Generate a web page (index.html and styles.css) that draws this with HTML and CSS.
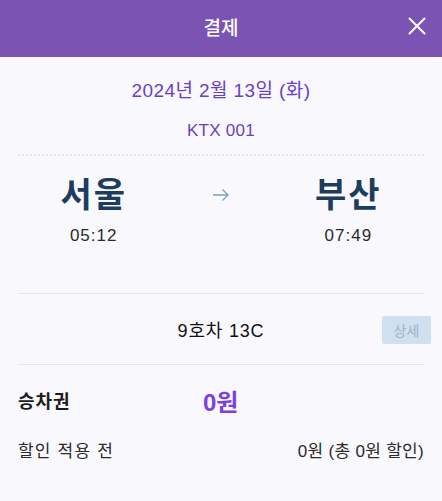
FILE: index.html
```html
<!DOCTYPE html>
<html lang="ko">
<head>
<meta charset="utf-8">
<link rel="stylesheet" href="styles.css">
</head>
<body>
<header class="topbar">
  <h1 class="title">결제</h1>
  <button class="close" aria-label="닫기">
    <svg width="18" height="18" viewBox="0 0 18 18"><path d="M1.5 1.5L16.5 16.5M16.5 1.5L1.5 16.5" stroke="#fff" stroke-width="2" stroke-linecap="round"/></svg>
  </button>
</header>
<main class="content">
  <section class="train">
    <div class="date">2024년 2월 13일 (화)</div>
    <div class="train-no">KTX 001</div>
  </section>
  <section class="route">
    <div class="station">
      <div class="name">서울</div>
      <div class="time">05:12</div>
    </div>
    <div class="arrow">
      <svg width="18" height="14" viewBox="0 0 18 14"><path d="M1 7H16M10.5 1.5L16 7L10.5 12.5" fill="none" stroke="#7f9fbc" stroke-width="1.3"/></svg>
    </div>
    <div class="station">
      <div class="name">부산</div>
      <div class="time">07:49</div>
    </div>
  </section>
  <section class="seat">
    <span class="seat-text">9호차 13C</span>
    <button class="detail">상세</button>
  </section>
  <section class="price">
    <div class="price-row">
      <span class="label">승차권</span>
      <span class="amount">0원</span>
    </div>
    <div class="discount-row">
      <span class="discount-label">할인 적용 전</span>
      <span class="discount-value">0원 (총 0원 할인)</span>
    </div>
  </section>
</main>
</body>
</html>
```
FILE: styles.css
```css
* { box-sizing: border-box; }
html, body {
  margin: 0;
  padding: 0;
  background: #f9f8fc;
  font-family: "Liberation Sans", "Noto Sans CJK KR", sans-serif;
}
.topbar {
  height: 57px;
  background: #7a53b3;
  display: flex;
  align-items: center;
  justify-content: center;
  position: relative;
}
.title {
  margin: 0;
  color: #fff;
  font-size: 19px;
  font-weight: 500;
  line-height: 1;
}
.close {
  position: absolute;
  right: 16px;
  top: 17px;
  background: none;
  border: 0;
  padding: 0;
  width: 18px;
  height: 18px;
  display: block;
}
.close svg { display: block; }
.content {
  padding: 0 18px;
}
.train {
  display: flex;
  flex-direction: column;
  align-items: center;
  padding-top: 21px;
  padding-bottom: 11px;
  border-bottom: 2px dotted #e6e4ec;
  color: #6a3fc7;
}
.date {
  font-size: 19px;
  line-height: 26px;
  letter-spacing: 0.4px;
}
.train-no {
  font-size: 17px;
  line-height: 24px;
  margin-top: 15px;
  letter-spacing: 0.3px;
}
.route {
  display: grid;
  grid-template-columns: 1fr 1fr 1fr;
  padding: 17px 12px 45px;
  border-bottom: 1px solid #e7e6ec;
}
.station {
  display: flex;
  flex-direction: column;
  align-items: center;
}
.name {
  font-size: 34px;
  font-weight: 700;
  color: #1d3c5e;
  line-height: 44px;
  letter-spacing: 2px;
}
.time {
  font-size: 17px;
  color: #2a2a2a;
  line-height: 24px;
  margin-top: 7px;
  letter-spacing: 1px;
}
.arrow {
  display: flex;
  justify-content: center;
  padding-top: 15px;
}
.arrow svg { display: block; }
.seat {
  position: relative;
  height: 71px;
  display: flex;
  align-items: center;
  justify-content: center;
  border-bottom: 1px solid #e7e6ec;
}
.seat-text {
  font-size: 18px;
  color: #111;
  letter-spacing: 0.8px;
}
.detail {
  position: absolute;
  right: -7px;
  top: 22px;
  width: 49px;
  height: 28px;
  border: 0;
  border-radius: 2px;
  background: #cfe1ef;
  color: #9ab4c9;
  font-family: inherit;
  font-size: 14px;
  padding: 0;
}
.price {
  padding-top: 19px;
}
.price-row {
  display: flex;
  align-items: center;
  height: 32px;
}
.label {
  font-size: 18px;
  font-weight: 700;
  color: #1b1b1b;
  width: 185px;
  letter-spacing: 1px;
}
.amount {
  font-size: 24px;
  font-weight: 700;
  color: #7b3fe2;
}
.discount-row {
  display: flex;
  justify-content: space-between;
  align-items: center;
  margin-top: 24px;
  font-size: 17px;
  color: #2a2a2a;
  line-height: 24px;
}
.discount-label { letter-spacing: 1.2px; }
.discount-value { letter-spacing: 0.3px; }
```
